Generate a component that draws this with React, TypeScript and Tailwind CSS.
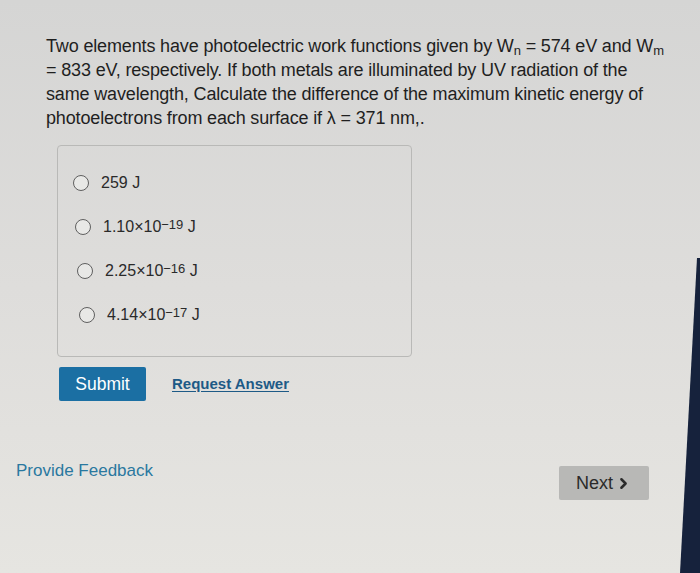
import { ChevronRight } from 'lucide-react';

const options = [
  { base: '259 J', exp: null as string | null },
  { base: '1.10×10', exp: '−19' },
  { base: '2.25×10', exp: '−16' },
  { base: '4.14×10', exp: '−17' },
];

export default function App() {
  return (
    <div
      className="relative w-[700px] h-[573px] overflow-hidden bg-gradient-to-b from-[#d5d5d4] via-[#dedddb] to-[#e6e5e1] text-[#222]"
      style={{ fontFamily: '"Liberation Sans", Arial, sans-serif' }}
    >
      {/* question */}
      <div className="pl-[46px] pr-[10px] pt-[34px]">
        <p className="text-[18px] leading-[24px] tracking-[-0.15px] text-[#1f1f1f] whitespace-nowrap">
          Two elements have photoelectric work functions given by W<sub className="text-[13px]">n</sub> = 574 eV and W
          <sub className="text-[13px]">m</sub>
          <br />= 833 eV, respectively. If both metals are illuminated by UV radiation of the
          <br />
          same wavelength, Calculate the difference of the maximum kinetic energy of
          <br />
          photoelectrons from each surface if λ = 371 nm,.
        </p>

        {/* options */}
        <div className="mt-[15px] ml-[11px] w-[355px] h-[212px] border border-[#b9b9b7] rounded-[4px] pt-[25px] pl-[15px] flex flex-col gap-[20px]">
          {options.map((o, i) => (
            <label key={i} className="flex items-center gap-[12px] h-[24px]" style={{ marginLeft: i * 2 }}>
              <span className="w-[16px] h-[16px] rounded-full border-[1.5px] border-[#5f5f5f] bg-[#e8e8e6]" />
              <span className="text-[16px] text-[#2a2a2a]">
                {o.base}
                {o.exp && <sup className="text-[13px] relative top-[-3px]">{o.exp}</sup>}
                {o.exp && ' J'}
              </span>
            </label>
          ))}
        </div>

        {/* actions */}
        <div className="mt-[10px] ml-[13px] flex items-center gap-[26px]">
          <button className="w-[87px] h-[34px] bg-[#1b6fa3] rounded-[2px] text-white text-[17.5px]">Submit</button>
          <a className="text-[15px] font-bold text-[#1d5a86] underline underline-offset-2">Request Answer</a>
        </div>
      </div>

      {/* footer */}
      <div className="mt-[58px] pl-[16px] pr-[51px] flex justify-between items-start">
        <a className="text-[17px] text-[#2a789f] mt-[-1px]">Provide Feedback</a>
        <button className="mt-[7px] w-[90px] h-[34px] bg-[#b8b8b6] rounded-[2px] flex items-center justify-center gap-[2px] text-[18px] text-[#2a2a2a]">
          Next
          <ChevronRight size={17} strokeWidth={3.5} />
        </button>
      </div>

      {/* monitor bezel edge from the photo */}
      <svg className="absolute inset-0 pointer-events-none" width="700" height="573">
        <polygon points="700,258 697,258 680,573 700,573" fill="#16223c" />
      </svg>
    </div>
  );
}
